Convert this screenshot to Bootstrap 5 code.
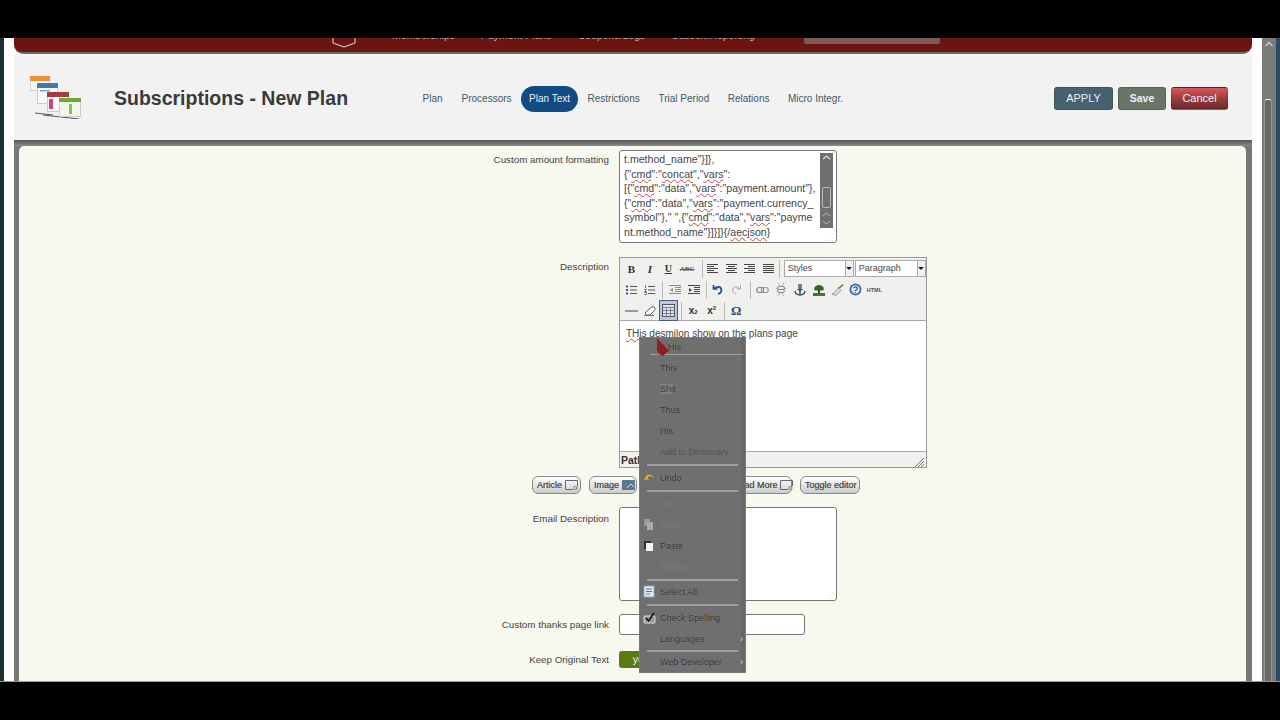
<!DOCTYPE html>
<html>

<head>
    <meta charset='utf-8'>
    <title>Subscriptions - New Plan</title>
    <link rel="stylesheet" href="https://cdn.jsdelivr.net/npm/bootstrap@5.3.0/dist/css/bootstrap.min.css">
    <style>
        html, body { height: 720px; overflow: hidden; background: #000; }
        body { font-family: "Liberation Sans", Arial, sans-serif; font-size: 10.5px; color: #444; }
        .screen { margin-top: 38px; height: 644px; overflow: hidden; position: relative; background: #fff; border-bottom: 1px solid #999; }
        .edge-left { width: 4px; background: #1c2c33; }
        .gutter-left { width: 10px; background: #fdfdfd; }
        .gutter-right { width: 10px; background: #fdfdfd; }
        .edge-right { width: 4px; background: #2d4a5e; }
        .main { width: 1238px; }

        /* browser scrollbar */
        .vscroll { width: 14px; background: #7b7b7b; }
        .vscroll svg { display: block; margin-bottom: 50px; }
        .vscroll .thumb { margin: 0 4px 0 2px; height: 583px; background: #686868; border: 1px solid #969696; border-top-color: #eee; border-radius: 3px 3px 0 0; }

        /* top red menu */
        .topbar { height: 16px; background: #6a1512; border-bottom: 2px solid #6b6b6b; border-radius: 0 0 9px 9px; overflow: hidden; }
        .topbar .links { margin-left: 36px; margin-top: -9px; gap: 26px; color: #c9b3b0; font-size: 10.5px; line-height: 13px; }
        .topbar svg { margin-left: 318px; display: block; flex: none; }
        .topbar .search { width: 136px; height: 6px; background: #7c5a59; border-radius: 0 0 2px 2px; margin-left: 49px; flex: none; }

        /* page header */
        .pagehead { height: 86px; background: #f2f2f2; padding-top: 2px; }
        .logo { margin-left: 15px; margin-top: -3px; width: 54px; flex: none; }
        .pagehead h1 { font-size: 19.5px; font-weight: 700; color: #3a3a3a; margin: 2px 0 0 31px; width: 299px; flex: none; }
        .pagehead .nav { margin-top: 2px; }
        .pagehead .nav-link { font-size: 10px; color: #3c5a68; padding: 0 9.5px; height: 26px; line-height: 26px; border-radius: 13px; }
        .pagehead .nav-item:nth-child(4) .nav-link { padding: 0 9.5px; }
        .pagehead .nav-item:nth-child(n+5) .nav-link { padding: 0 9.25px; }
        .pagehead .nav-link.active { background: #124a84; color: #e8eef5; padding: 0 8px; }
        .pagehead .btn { font-size: 11px; line-height: 14px; border-radius: 3px; padding: 3px 0; height: 23px; color: #eef; border: 1px solid rgba(0,0,0,.15); }
        .btn-apply { width: 59px; background: #46626e; }
        .pagehead .btn-save { width: 48px; background: #6b7468; font-weight: 700; font-size: 10.5px; }
        .btn-cancel { width: 57px; background: linear-gradient(#d9575b, #9a3c3e 50%, #6c2a2b); }
        .actions { margin-right: 24px; gap: 5px; }

        /* form panel */
        .band { height: 6px; background: linear-gradient(#555, #8a8a8a); }
        .panel-wrap { background: #777; padding: 0 6px 0 5px; height: 536px; }
        .panel { background: #f7f8ee; border-radius: 5px 5px 0 0; height: 535px; padding-top: 4px; overflow: hidden; }
        .frow { display: flex; }
        .frow label { width: 590px; text-align: right; flex: none; margin-right: 10px; padding-top: 1px; color: #444; font-size: 9.8px; }
        .frow label.top { padding-top: 3px; }
        .frow label.top-email { padding-top: 5px; }
        .gap-14 { margin-top: 14px; }
        .gap-13 { margin-top: 13px; }
        .gap-16 { margin-top: 16px; }
        .box { background: #fff; border: 1px solid #777; border-radius: 3px; position: relative; }
        .amount { width: 218px; height: 93px; padding: 1px 19px 0 4px; line-height: 14.5px; font-size: 10.6px; overflow: hidden; word-break: break-all; color: #444; }
        .sp { text-decoration: underline wavy #c44; text-decoration-thickness: 1px; }
        .inner-scroll { position: absolute; left: 200px; top: 2px; width: 13px; height: 75px; background: #6f6f6f; }
        .inner-scroll svg { display: block; }
        .inner-scroll .thumb { position: absolute; top: 34px; left: 2px; width: 9px; height: 21px; border: 1px solid #bbb; border-radius: 2px; }
        .inner-scroll .down { position: absolute; bottom: 2px; left: 0; }
        .grip { position: absolute; right: 2px; bottom: 1px; }

        /* editor */
        .editor { width: 308px; height: 211px; border: 1px solid #999; background: #f0f0ee; }
        .tools { height: 63px; padding: 0 0 0 2px; border-bottom: 1px solid #aaa; }
        .tline { height: 21px; display: flex; align-items: center; }
        .tb { width: 18.6px; height: 21px; flex: none; display: flex; align-items: center; justify-content: center; color: #333; }
        .tb svg { display: block; }
        .tb.active { background: #bcc7dc; outline: 1px solid #4a5a7a; outline-offset: -1px; }
        .sep { width: 1px; height: 18px; background: #bbb; flex: none; }
        .sep-a { margin: 0 0 0 6px; }
        .sep-b { margin: 0 4px 0 1px; }
        .sep-c { margin: 0 3px 0 3px; }
        .sep-d { margin: 0 2px 0 3px; }
        .sep-f { margin: 0 1px 0 3px; }
        .sep-g { margin: 0 3px 0 4px; }
        .sep-h { margin: 0 2px 0 3px; }
        .t-b { font: 700 11px "Liberation Serif", serif; }
        .t-i { font: italic 700 11px "Liberation Serif", serif; }
        .t-u { font: 700 10px "Liberation Serif", serif; text-decoration: underline; }
        .t-abc { font: 700 7px "Liberation Serif", serif; text-decoration: line-through; color: #555; }
        .t-html { font: 700 5.5px "Liberation Sans", sans-serif; color: #555; }
        .t-om { font: 700 13px "Liberation Serif", serif; color: #2c4a6e; }
        .t-xs { font: 700 10px "Liberation Sans", sans-serif; }
        .t-xs sub, .t-xs sup { font-size: 6px; }
        .pick { height: 17px; background: #fff; border: 1px solid #aaa; font-size: 9px; line-height: 15px; padding-left: 3px; position: relative; flex: none; }
        .pick::after { content: ""; position: absolute; right: 0; top: 0; bottom: 0; width: 8px; background: #f0f0ee; border-left: 1px solid #aaa; }
        .pick i { position: absolute; right: 1px; top: 6px; z-index: 1; border: 3px solid transparent; border-top-color: #222; border-bottom: 0; }
        .pick-styles { width: 70px; }
        .pick-para { width: 71px; margin-left: 1px; }
        .edit-body { height: 130px; background: #fff; padding: 6px 6px 0; line-height: 14px; color: #444; font-size: 10px; }
        .edit-status { height: 17px; border-top: 1px solid #aaa; padding-left: 1px; line-height: 16px; font-weight: 700; color: #333; position: relative; }

        /* editor-xtd buttons */
        .xtd { margin-left: 513px; margin-top: 8px; height: 18px; gap: 8px; }
        .xtd .btn { height: 18px; padding: 0 0 0 4px; font-size: 9px; line-height: 16px; color: #555; border: 1px solid #888; border-radius: 6px; background: linear-gradient(#fff, #ccc); display: flex; align-items: center; gap: 3px; flex: none; white-space: nowrap; text-shadow: 0 0 .6px #555; }
        .xtd .btn svg { flex: none; }
        .x-article { width: 49px; }
        .x-image { width: 48px; }
        .x-break { width: 78px; }
        .xtd .x-more { width: 61px; padding-left: 1px; gap: 2px; }
        .x-toggle { width: 60px; }

        .email { width: 218px; height: 94px; }
        .thanks { width: 186px; height: 21px; }
        .toggle-yes { width: 44px; height: 17px; background: #5a7b14; border-radius: 3px; color: #eee; text-align: center; line-height: 16px; }

        /* context menu */
        .ctx.dropdown-menu { display: block; left: 639px; top: 299px; width: 107px; min-width: 0; height: 336px; padding: 0; margin: 0; background: #6f6f6f; border: 0; border-radius: 0; box-shadow: inset 0 0 0 1px #7a7a7a, inset -5px 0 0 #676767; z-index: 5; }
        .ctx .dropdown-item { height: 21px; line-height: 21px; padding: 0 0 0 21px; color: #2f2f2f; font-size: 9px; position: relative; text-shadow: 0 0 1px #999; }
        .ctx .dropdown-item.off { color: #7c7c7c; text-shadow: none; }
        .ctx .dropdown-item.dim { color: #525252; }
        .ctx .dropdown-item.first { padding-left: 29px; background: linear-gradient(transparent 16.5px, #a0a0a0 16.5px, #a0a0a0 18px, transparent 18px) no-repeat 11px 0 / 93px 21px; }
        .ctx .dropdown-item.more::after { content: "\203A"; position: absolute; right: 3px; top: 0; color: #ccc; }
        .ctx .dropdown-item svg { position: absolute; left: 4px; top: 3px; }
        .ctx .dropdown-item mark { padding: 0; background: #7e7e7e; color: inherit; }
        .ctx .dropdown-divider { height: 5px; margin: 0 8px; border: 0; background: linear-gradient(transparent 1px, #a0a0a0 1px, #a0a0a0 3px, transparent 3px); opacity: 1; }
        .ctx .dropdown-divider.narrow { height: 4px; }
        .ctx .dropdown-divider.thin { height: 2px; background: #a0a0a0; }
        .ctx .dropdown-divider.spaced { margin-top: 1px; margin-bottom: 2px; }
        .cursor { position: absolute; left: 657px; top: 300px; z-index: 6; }
    </style>
</head>

<body>
    <div class="screen d-flex">
        <div class="edge-left"></div>
        <div class="gutter-left"></div>

        <div class="main">
            <div class="topbar d-flex">
                <svg width="24" height="10" viewBox="0 0 24 10"><path d="M1 0V5L12 9L23 5V0" fill="none" stroke="#e6d8d6" stroke-width="1"/></svg>
                <div class="links d-flex">
                    <span>Memberships</span><span>Payment Plans</span><span>Coupons/Logs</span><span>Subscr./Reporting</span>
                </div>
                <div class="search"></div>
            </div>

            <div class="pagehead d-flex align-items-center">
                <svg class="logo" width="54" height="44" viewBox="0 0 54 44">
                    <path d="M6 38L24 40M14 40L50 44" stroke="#555" stroke-width="1" fill="none"/>
                    <rect x="1.500" y="1.500" width="19" height="14" fill="#fafafa" stroke="#ccc"/>
                    <rect x="1" y="1" width="20" height="5" fill="#ee8f3c"/>
                    <rect x="8.500" y="8.500" width="20" height="20" fill="#fafafa" stroke="#ccc"/>
                    <rect x="8" y="8" width="21" height="5" fill="#3e7cb4"/>
                    <rect x="11" y="15" width="10" height="1.500" fill="#7aa6cc"/>
                    <rect x="18.500" y="17.500" width="21" height="19" fill="#fafafa" stroke="#ccc"/>
                    <rect x="18" y="17" width="22" height="5" fill="#a83a40"/>
                    <rect x="20" y="24" width="4" height="10" fill="#c84a70"/>
                    <rect x="30.500" y="23.500" width="21" height="18" fill="#f2f6ea" stroke="#ccc"/>
                    <rect x="30" y="23" width="22" height="4" fill="#6fa83c"/>
                    <rect x="40" y="29" width="3" height="10" fill="#8cc24a"/>
                </svg>
                <h1>Subscriptions - New Plan</h1>
                <ul class="nav nav-pills align-items-center">
                    <li class="nav-item"><a class="nav-link" href="#">Plan</a></li>
                    <li class="nav-item"><a class="nav-link" href="#">Processors</a></li>
                    <li class="nav-item"><a class="nav-link active" href="#">Plan Text</a></li>
                    <li class="nav-item"><a class="nav-link" href="#">Restrictions</a></li>
                    <li class="nav-item"><a class="nav-link" href="#">Trial Period</a></li>
                    <li class="nav-item"><a class="nav-link" href="#">Relations</a></li>
                    <li class="nav-item"><a class="nav-link" href="#">Micro Integr.</a></li>
                </ul>
                <div class="actions d-flex ms-auto">
                    <button class="btn btn-apply" type="button">APPLY</button>
                    <button class="btn btn-save" type="button">Save</button>
                    <button class="btn btn-cancel" type="button">Cancel</button>
                </div>
            </div>

            <div class="band"></div>
            <div class="panel-wrap">
                <div class="panel">
                    <div class="frow">
                        <label class="top">Custom amount formatting</label>
                        <div class="box amount">t.method_name"}]},<br>{"<span class="sp">cmd</span>":"<span class="sp">concat</span>","<span class="sp">vars</span>":<br>[{"<span class="sp">cmd</span>":"data","<span class="sp">vars</span>":"payment.amount"},<br>{"<span class="sp">cmd</span>":"data","<span class="sp">vars</span>":"payment.currency_<br>symbol"}," ",{"<span class="sp">cmd</span>":"data","<span class="sp">vars</span>":"payme<br>nt.method_name"}]}]}{/<span class="sp">aecjson</span>}
                            <div class="inner-scroll">
                                <svg width="13" height="9" viewBox="0 0 13 9"><path d="M3 6L6.500 3L10 6" fill="none" stroke="#ddd" stroke-width="1.300"/></svg>
                                <div class="thumb"></div>
                                <svg class="down" width="13" height="15" viewBox="0 0 13 15"><path d="M3 5L6.500 2L10 5M3 10L6.500 13L10 10" fill="none" stroke="#bbb" stroke-width="1"/></svg>
                            </div>
                            <svg class="grip" width="9" height="8" viewBox="0 0 9 8"><path d="M8 1V1.500M5 4V4.500M8 4V4.500M2 7V7.500M5 7V7.500M8 7V7.500" stroke="#aaa" stroke-width="1"/></svg>
                        </div>
                    </div>

                    <div class="frow gap-14">
                        <label class="top">Description</label>
                        <div class="editor">
                            <div class="tools">
                                <div class="tline">
                                    <span class="tb t-b">B</span><span class="tb t-i">I</span><span class="tb t-u">U</span><span class="tb t-abc">ABC</span>
                                    <span class="sep sep-a"></span>
                                    <span class="tb"><svg width="11" height="9"><path d="M0 .5H11M0 2.500H7M0 4.500H11M0 6.500H7M0 8.500H11" stroke="#444"/></svg></span>
                                    <span class="tb"><svg width="11" height="9"><path d="M0 .5H11M2 2.500H9M0 4.500H11M2 6.500H9M0 8.500H11" stroke="#444"/></svg></span>
                                    <span class="tb"><svg width="11" height="9"><path d="M0 .5H11M4 2.500H11M0 4.500H11M4 6.500H11M0 8.500H11" stroke="#444"/></svg></span>
                                    <span class="tb"><svg width="11" height="9"><path d="M0 .5H11M0 2.500H11M0 4.500H11M0 6.500H11M0 8.500H11" stroke="#444"/></svg></span>
                                    <span class="sep sep-b"></span>
                                    <span class="pick pick-styles">Styles<i></i></span>
                                    <span class="pick pick-para">Paragraph<i></i></span>
                                </div>
                                <div class="tline">
                                    <span class="tb"><svg width="11" height="10"><path d="M4 1.500H11M4 5H11M4 8.500H11" stroke="#555"/><path d="M0 .5H2V2.500H0ZM0 4H2V6H0ZM0 7.500H2V9.500H0Z" fill="#2a5a9a"/></svg></span>
                                    <span class="tb"><svg width="11" height="10"><path d="M4 1.500H11M4 5H11M4 8.500H11" stroke="#555"/><path d="M1.500 0V3M.5 4.500H2.500L.5 6.500H2.500M.5 7.500H2.500V9.500H.5" stroke="#2a5a9a" fill="none" stroke-width=".8"/></svg></span>
                                    <span class="sep sep-c"></span>
                                    <span class="tb"><svg width="12" height="10"><path d="M0 .5H12M6 2.500H12M6 4.500H12M6 6.500H12M0 8.500H12" stroke="#888"/><path d="M4 3L1 5L4 7Z" fill="#888"/></svg></span>
                                    <span class="tb"><svg width="12" height="10"><path d="M0 .5H12M6 2.500H12M6 4.500H12M6 6.500H12M0 8.500H12" stroke="#444"/><path d="M1 3L4 5L1 7Z" fill="#444"/></svg></span>
                                    <span class="sep sep-f"></span>
                                    <span class="tb"><svg width="11" height="11"><path d="M1.500 1V5H5.500M2 5C4 2 9 2 9.500 6C9.500 8 8 9.500 6 10" fill="none" stroke="#1f4f8f" stroke-width="1.700"/></svg></span>
                                    <span class="tb"><svg width="11" height="11"><path d="M9.500 1V5H5.500M9 5C7 2 2 2 1.500 6C1.500 8 3 9.500 5 10" fill="none" stroke="#aaa" stroke-width="1"/></svg></span>
                                    <span class="sep sep-g"></span>
                                    <span class="tb"><svg width="13" height="8"><rect x=".7" y="1.500" width="7" height="5" rx="2.500" fill="none" stroke="#888" stroke-width="1.200"/><rect x="5.300" y="1.500" width="7" height="5" rx="2.500" fill="none" stroke="#999" stroke-width="1.200"/></svg></span>
                                    <span class="tb"><svg width="12" height="13"><path d="M3 0L5 3M9 0L7 3M1 5.500H3M9 5.500H11M3 13L5 10M9 13L7 10" stroke="#999" stroke-width=".8"/><rect x="2.500" y="3.500" width="7" height="3" rx="1.500" fill="none" stroke="#888"/><rect x="2.500" y="6.500" width="7" height="3" rx="1.500" fill="none" stroke="#888"/></svg></span>
                                    <span class="tb"><svg width="12" height="12"><circle cx="6" cy="2" r="1.400" fill="none" stroke="#2a4a5a" stroke-width="1.200"/><path d="M6 3.500V11M3.500 5.500H8.500M1 7C1.500 10 4 11 6 11C8 11 10.500 10 11 7" fill="none" stroke="#2a4a5a" stroke-width="1.500"/></svg></span>
                                    <span class="tb"><svg width="12" height="12"><rect y="9" width="12" height="3" fill="#3f7a2a"/><path d="M6 1C2 1 0 5 2 6.500H10C12 5 10 1 6 1Z" fill="#2f6a22"/><rect x="5" y="6" width="2" height="3" fill="#5a3a1a"/></svg></span>
                                    <span class="tb"><svg width="13" height="12"><path d="M12.500 .5L7 5" stroke="#8a6a2a" stroke-width="1.500"/><path d="M7.500 3.500L10 6.500L5 11.500L1 10C3 9.500 4.500 7.500 7.500 3.500Z" fill="#ddd" stroke="#777" stroke-width=".7"/></svg></span>
                                    <span class="tb"><svg width="13" height="13"><circle cx="6.500" cy="6.500" r="6" fill="#3a6ab0"/><circle cx="6.500" cy="6.500" r="4.200" fill="#dde8f5"/><path d="M4.800 5C5 3.500 8.500 3.500 8.300 5.500C8.200 6.700 6.500 6.500 6.500 8M6.500 9V10" fill="none" stroke="#2a5a9a" stroke-width="1.300"/></svg></span>
                                    <span class="tb t-html">HTML</span>
                                </div>
                                <div class="tline">
                                    <span class="tb"><svg width="13" height="2"><path d="M0 1H13" stroke="#444"/></svg></span>
                                    <span class="tb"><svg width="12" height="10"><path d="M1 7L7 1.500C8 .5 10 .5 11 2C11.500 3 11 4 10 5L6 9H2.500Z" fill="#fff" stroke="#555"/><path d="M0 9.500H10" stroke="#777"/></svg></span>
                                    <span class="tb active"><svg width="13" height="13"><rect x=".5" y=".5" width="12" height="12" fill="#dfe3ea" stroke="#556"/><path d="M.5 3.500H12.500M.5 6.500H12.500M.5 9.500H12.500M4.500 3.500V12.500M8.500 3.500V12.500" stroke="#667" stroke-width=".8"/></svg></span>
                                    <span class="sep sep-h"></span>
                                    <span class="tb t-xs">x<sub>2</sub></span>
                                    <span class="tb t-xs">x<sup>2</sup></span>
                                    <span class="sep sep-d"></span>
                                    <span class="tb t-om">Ω</span>
                                </div>
                            </div>
                            <div class="edit-body"><span class="sp">THis</span> desmilon show on the plans page</div>
                            <div class="edit-status">Path
                                <svg class="grip" width="9" height="9" viewBox="0 0 9 9"><path d="M0 9L9 0M3 9L9 3M6 9L9 6" stroke="#777" stroke-width="1"/></svg>
                            </div>
                        </div>
                    </div>

                    <div class="xtd d-flex">
                        <button class="btn x-article" type="button">Article
                            <svg width="13" height="10" viewBox="0 0 13 10"><path d="M.5 .5H12.500V6M.5 .5V9.500H8" fill="none" stroke="#667"/><circle cx="10.500" cy="8" r="1.500" fill="#fff" stroke="#666"/></svg></button>
                        <button class="btn x-image" type="button">Image
                            <svg width="13" height="10" viewBox="0 0 13 10"><rect width="13" height="10" fill="#5c7a8a"/><path d="M5 8L9 4L12 7" stroke="#dde" fill="none"/></svg></button>
                        <button class="btn x-break" type="button">Pagebreak</button>
                        <button class="btn x-more" type="button">Read More
                            <svg width="13" height="10" viewBox="0 0 13 10"><path d="M.5 .5H12.500V6M.5 .5V9.500H8" fill="none" stroke="#667"/><circle cx="10.500" cy="8" r="1.500" fill="#fff" stroke="#666"/></svg></button>
                        <button class="btn x-toggle" type="button">Toggle editor</button>
                    </div>

                    <div class="frow gap-13">
                        <label class="top-email">Email Description</label>
                        <div class="box email">
                            <svg class="grip" width="9" height="8" viewBox="0 0 9 8"><path d="M8 1V1.500M5 4V4.500M8 4V4.500M2 7V7.500M5 7V7.500M8 7V7.500" stroke="#aaa" stroke-width="1"/></svg>
                        </div>
                    </div>

                    <div class="frow align-items-center gap-13">
                        <label>Custom thanks page link</label>
                        <div class="box thanks"></div>
                    </div>

                    <div class="frow align-items-center gap-16">
                        <label>Keep Original Text</label>
                        <div class="toggle-yes">yes</div>
                    </div>
                </div>
            </div>
        </div>

        <div class="gutter-right"></div>
        <div class="vscroll">
            <svg width="14" height="11" viewBox="0 0 14 11"><path d="M3.500 8L7 4.500L10.500 8" fill="none" stroke="#ccc" stroke-width="1.300"/></svg>
            <div class="thumb"></div>
        </div>
        <div class="edge-right"></div>

        <ul class="ctx dropdown-menu list-unstyled">
            <li class="dropdown-item first">His</li>
            <li class="dropdown-item">This</li>
            <li class="dropdown-item"><mark>Shi</mark>t</li>
            <li class="dropdown-item">Thus</li>
            <li class="dropdown-item">His</li>
            <li class="dropdown-item off dim">Add to Dictionary</li>
            <li class="dropdown-divider thin spaced"></li>
            <li class="dropdown-item"><svg width="13" height="13" viewBox="0 0 13 13"><path d="M2 7C2 2 11 2 11.500 8C9 5 6 5 5 7L7 9H1V4Z" fill="#d9b23c" stroke="#555" stroke-width=".5"/></svg>Undo</li>
            <li class="dropdown-divider"></li>
            <li class="dropdown-item off">Cut</li>
            <li class="dropdown-item off"><svg width="12" height="13" viewBox="0 0 12 13"><path d="M1 1H7V8H1Z" fill="#999"/><path d="M4 4H10V12H4Z" fill="#aaa"/></svg>Copy</li>
            <li class="dropdown-item"><svg width="12" height="13" viewBox="0 0 12 13"><path d="M1 2H8V10H1Z" fill="#333"/><path d="M3 4H10V12H3Z" fill="#f4f4f4"/></svg>Paste</li>
            <li class="dropdown-item off">Delete</li>
            <li class="dropdown-divider narrow"></li>
            <li class="dropdown-item"><svg width="12" height="13" viewBox="0 0 12 13"><rect x="1" y="1" width="10" height="11" fill="#dfeaf5" stroke="#8ab"/><path d="M3 4H9M3 6.500H9M3 9H7" stroke="#3a7ab8"/></svg>Select All</li>
            <li class="dropdown-divider"></li>
            <li class="dropdown-item"><svg width="13" height="13" viewBox="0 0 13 13"><rect x="1" y="5" width="11" height="7" rx="1" fill="#999" stroke="#ddd"/><path d="M3 7L5.500 10L11 2" fill="none" stroke="#111" stroke-width="1.600"/></svg>Check Spelling</li>
            <li class="dropdown-item more">Languages</li>
            <li class="dropdown-divider thin"></li>
            <li class="dropdown-item more">Web Developer</li>
        </ul>
        <svg class="cursor" width="12" height="19" viewBox="0 0 12 19"><path d="M0 0L12 13L9 15L6 18L2 16L0 12Z" fill="#8e1f24"/></svg>
    </div>
    <script src="https://cdn.jsdelivr.net/npm/bootstrap@5.3.0/dist/js/bootstrap.bundle.min.js"></script>
</body>

</html>
